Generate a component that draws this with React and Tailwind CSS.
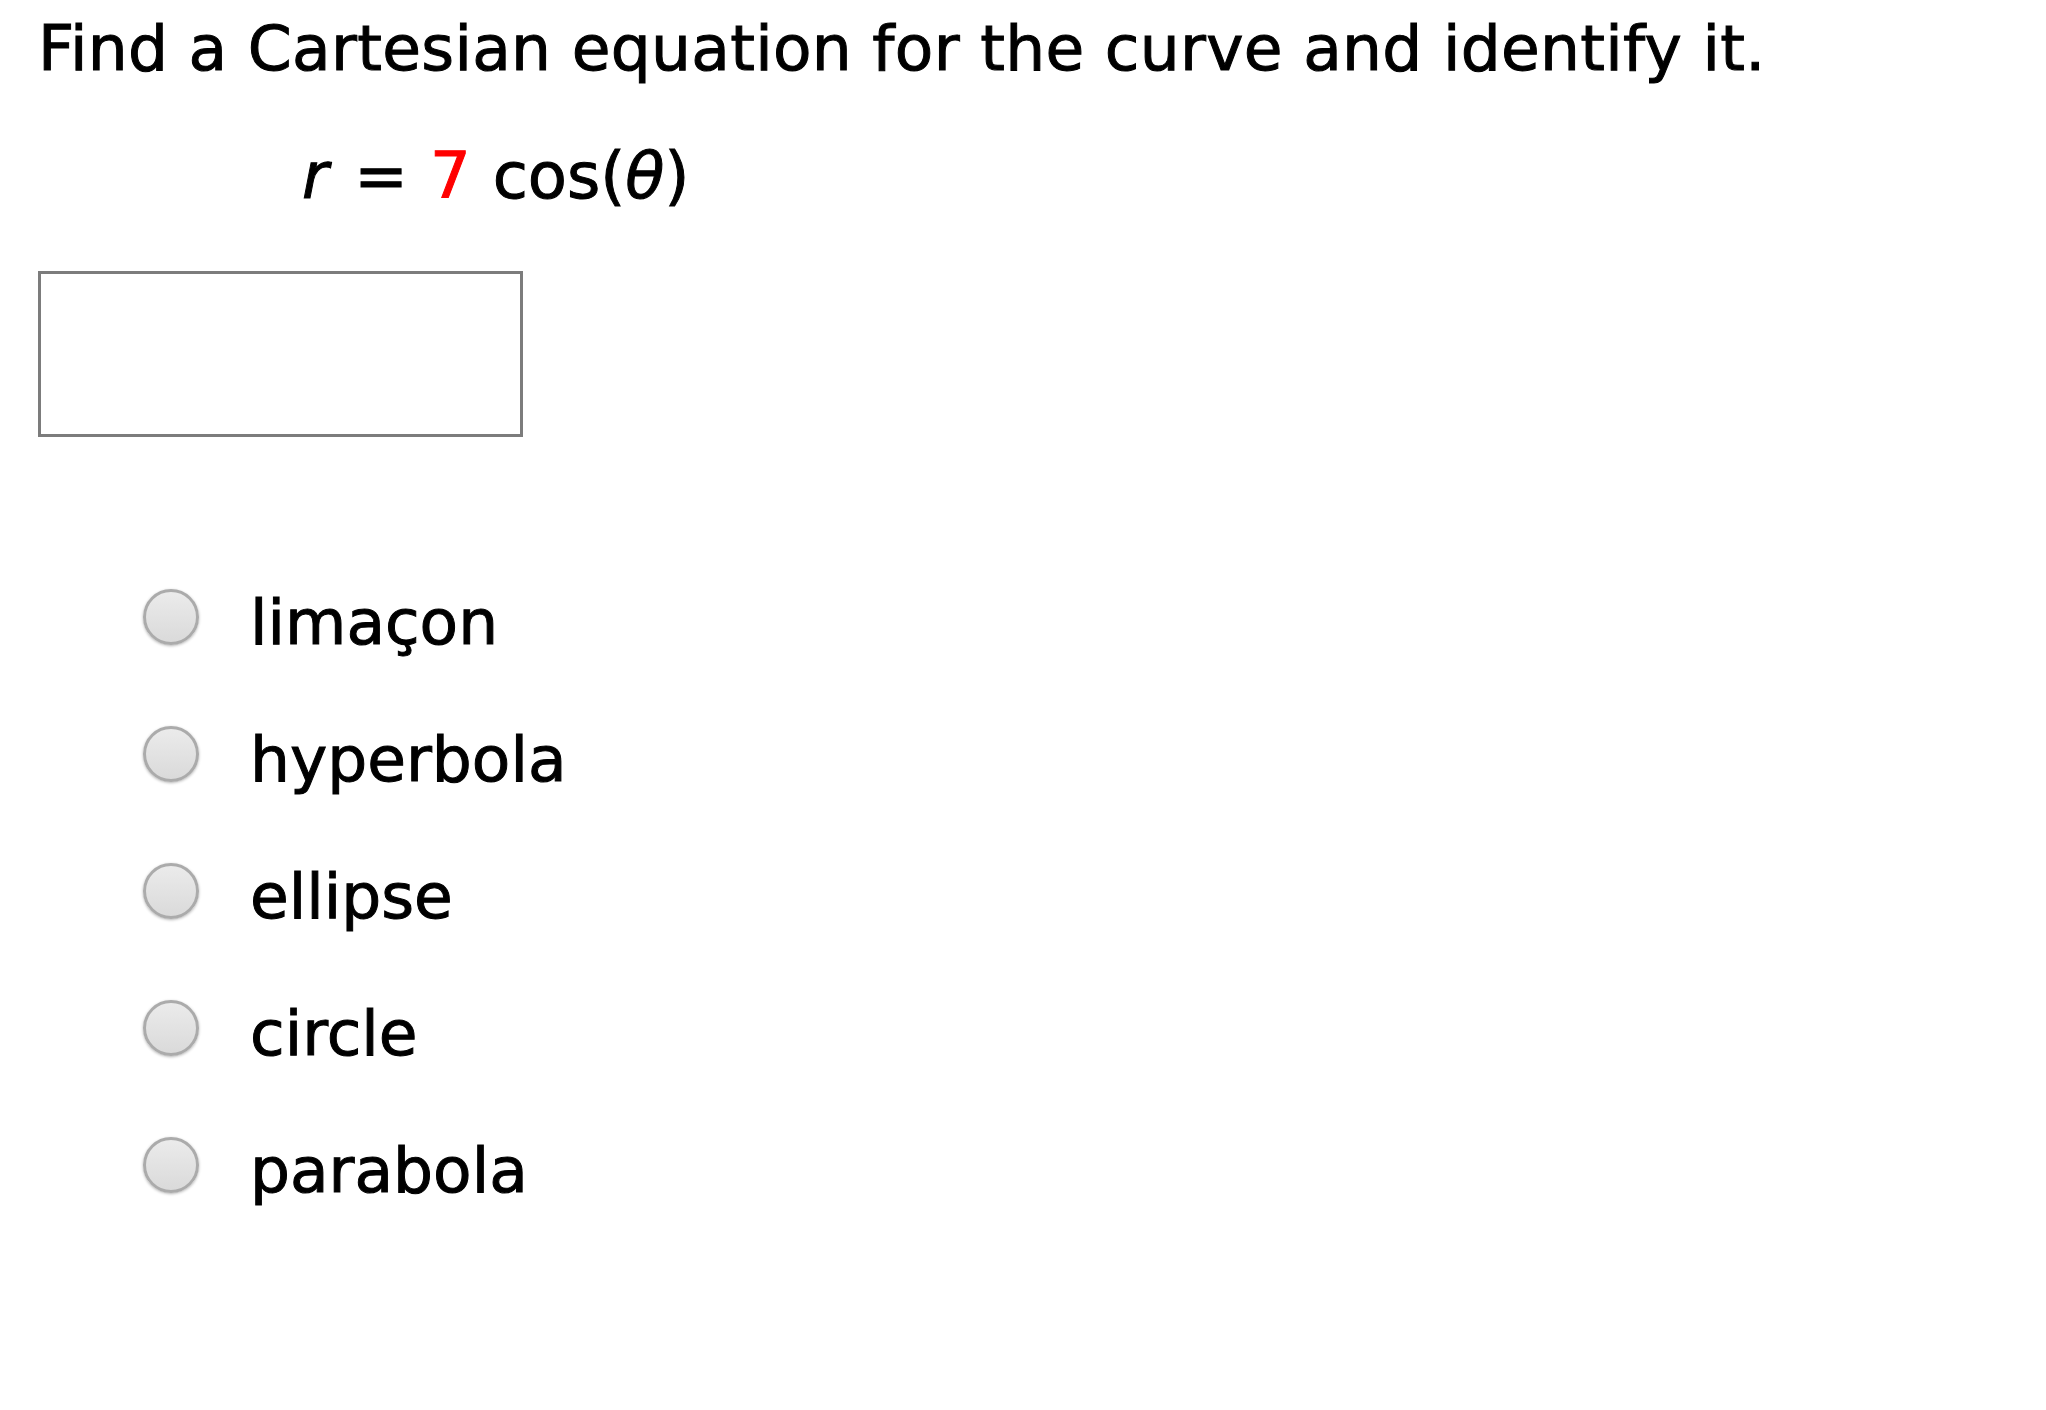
const options = ["limaçon", "hyperbola", "ellipse", "circle", "parabola"];

export default function App() {
  return (
    <div
      className="min-h-screen bg-white pl-[38px] pt-[12px] text-black text-[63px] leading-[74px] [-webkit-text-stroke:1px_#000]"
      style={{ fontFamily: '"DejaVu Sans", Verdana, sans-serif' }}
    >
      <p className="tracking-[0.3px] whitespace-nowrap">Find a Cartesian equation for the curve and identify it.</p>

      <div className="mt-[53px] ml-[264px] text-[64px] whitespace-nowrap">
        <span className="italic">r</span>
        <span className="ml-[26px]">=</span>
        <span className="ml-[22px] text-[#ff0000] [-webkit-text-stroke:1px_#ff0000]">7</span>
        <span className="ml-[22px]">cos(</span>
        <span className="italic">θ</span>
        <span>)</span>
      </div>

      <input
        type="text"
        className="block mt-[58px] w-[485px] h-[166px] border-[3px] border-[#7c7c7c] bg-white outline-none"
      />

      <div className="mt-[152px] ml-[105px] flex flex-col">
        {options.map((o) => (
          <label key={o} className="flex items-start h-[137px]">
            <span className="w-[56px] h-[56px] rounded-full border-[3px] border-[#ababab] bg-gradient-to-b from-[#ebebeb] to-[#dadada] shadow-[0_1px_3px_rgba(0,0,0,0.3)] shrink-0" />
            <span className="ml-[51px] -mt-[3px]">{o}</span>
          </label>
        ))}
      </div>
    </div>
  );
}
